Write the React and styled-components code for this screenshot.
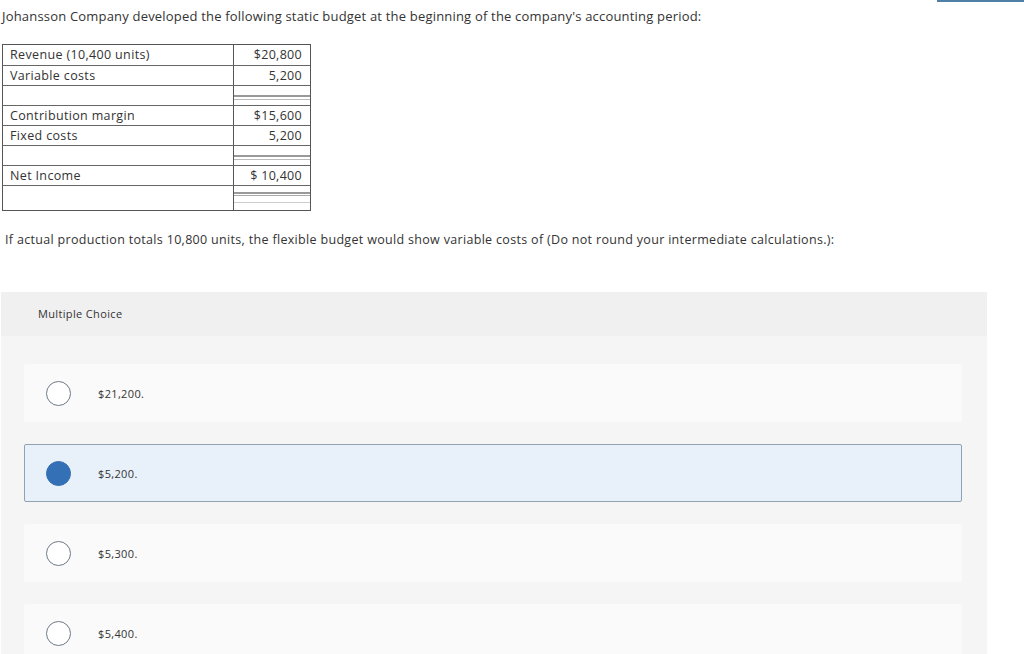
import styled, { createGlobalStyle } from "styled-components";

const Global = createGlobalStyle`
    body {
        margin: 0;
        background: #fff;
        font-family: "Open Sans", "Liberation Sans", sans-serif;
        color: #333;
    }
`;

const Page = styled.div`
    position: relative;
    width: 1024px;
    height: 654px;
    overflow: hidden;
`;

const TopBar = styled.div`
    position: absolute;
    top: 0;
    right: 0;
    width: 87px;
    height: 2px;
    background: #4f7ea6;
`;

const Intro = styled.p`
    margin: 0;
    padding: 8px 0 0 2px;
    font-size: 13px;
    line-height: 16px;
    letter-spacing: 0.19px;
    color: #333;
`;

const Table = styled.div`
    margin: 20px 0 0 2px;
    width: 307px;
    border: 1px solid #555;
`;

const Row = styled.div`
    display: grid;
    grid-template-columns: 231px 1fr;
    height: ${(p) => p.$h || 20}px;
    border-top: ${(p) => (p.$first ? "none" : "1px solid #666")};
    box-sizing: border-box;
`;

const Label = styled.div`
    border-right: 1px solid #555;
    padding: 2px 0 0 7px;
    font-size: 12.5px;
    line-height: 16px;
    letter-spacing: 0.35px;
    color: #333;
`;

const Amount = styled.div`
    display: flex;
    flex-direction: column;
    padding: 2px 8px 0 0;
    text-align: right;
    font-size: 12.5px;
    line-height: 16px;
    letter-spacing: 0.3px;
    color: #333;
`;

const Rule = styled.div`
    margin-top: ${(p) => p.$top}px;
    height: ${(p) => p.$w || 1}px;
    margin-right: -8px;
    background: ${(p) => p.$c || "#888"};
`;

const Question = styled.p`
    margin: 21px 0 0 5px;
    font-size: 12.5px;
    line-height: 16px;
    letter-spacing: 0.32px;
    color: #333;
`;

const Panel = styled.div`
    margin: 44px 0 0 1px;
    width: 986px;
    height: 400px;
    background: #f5f5f5;
`;

const PanelHead = styled.div`
    height: 44px;
    background: #f0f0f0;
    display: flex;
    align-items: center;
    padding-left: 37px;
    padding-bottom: 1px;
    box-sizing: border-box;
    font-size: 11px;
    letter-spacing: 0.35px;
    color: #333;
`;

const Choices = styled.div`
    display: flex;
    flex-direction: column;
    gap: 22px;
    padding: 28px 25px 0 23px;
`;

const Choice = styled.div`
    height: 58px;
    box-sizing: border-box;
    display: flex;
    align-items: center;
    padding-left: 21px;
    background: ${(p) => (p.$selected ? "#e8f1fa" : "#fafafa")};
    border: 1px solid ${(p) => (p.$selected ? "#8ea2b4" : "#fafafa")};
    border-radius: 2px;
`;

const Radio = styled.span`
    width: 25px;
    height: 25px;
    box-sizing: border-box;
    border-radius: 50%;
    border: 1px solid ${(p) => (p.$on ? "#3470b5" : "#6d7a88")};
    background: ${(p) => (p.$on ? "#3470b5" : "#fff")};
    flex-shrink: 0;
`;

const ChoiceText = styled.span`
    margin-left: 27px;
    font-size: 11px;
    letter-spacing: 0.35px;
    color: #333;
`;

const rows = [
    { label: "Revenue (10,400 units)", value: "$20,800" },
    { label: "Variable costs", value: "5,200" },
    { rules: [[7, 2, "#999"], [2, 1, "#bbb"]] },
    { label: "Contribution margin", value: "$15,600" },
    { label: "Fixed costs", value: "5,200" },
    { rules: [[7, 2, "#999"], [2, 1, "#bbb"]] },
    { label: "Net Income", value: "$ 10,400" },
    { h: 25, rules: [[4, 2, "#999"], [1, 1, "#aaa"], [6, 1, "#ccc"]] },
];

const options = ["$21,200.", "$5,200.", "$5,300.", "$5,400."];

const App = () => {
    return (
        <Page>
            <Global />
            <TopBar />
            <Intro>
                Johansson Company developed the following static budget at the
                beginning of the company's accounting period:
            </Intro>
            <Table>
                {rows.map((r, i) => (
                    <Row key={i} $first={i === 0} $h={r.h}>
                        <Label>{r.label}</Label>
                        <Amount>
                            {r.value}
                            {r.rules &&
                                r.rules.map(([top, w, c], j) => (
                                    <Rule key={j} $top={top} $w={w} $c={c} />
                                ))}
                        </Amount>
                    </Row>
                ))}
            </Table>
            <Question>
                If actual production totals 10,800 units, the flexible budget
                would show variable costs of (Do not round your intermediate
                calculations.):
            </Question>
            <Panel>
                <PanelHead>Multiple Choice</PanelHead>
                <Choices>
                    {options.map((o, i) => (
                        <Choice key={o} $selected={i === 1}>
                            <Radio $on={i === 1} />
                            <ChoiceText>{o}</ChoiceText>
                        </Choice>
                    ))}
                </Choices>
            </Panel>
        </Page>
    );
};

export default App;
